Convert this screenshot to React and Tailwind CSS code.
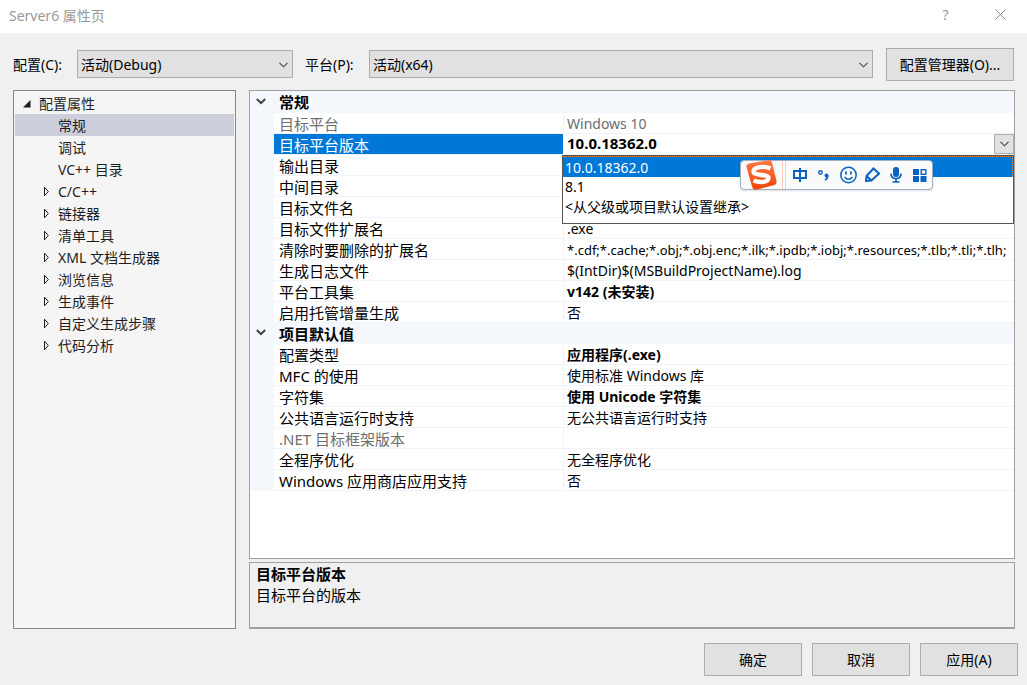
import React, { useState } from 'react';

const treeItems = [
  { label: '常规' },
  { label: '调试' },
  { label: 'VC++ 目录' },
  { label: 'C/C++', expandable: true },
  { label: '链接器', expandable: true },
  { label: '清单工具', expandable: true },
  { label: 'XML 文档生成器', expandable: true },
  { label: '浏览信息', expandable: true },
  { label: '生成事件', expandable: true },
  { label: '自定义生成步骤', expandable: true },
  { label: '代码分析', expandable: true },
];

const versions = ['10.0.18362.0', '8.1', '<从父级或项目默认设置继承>'];

const sections = [
  {
    title: '常规',
    rows: [
      { name: '目标平台', value: 'Windows 10', disabled: true },
      { name: '目标平台版本', value: '10.0.18362.0', editor: true },
      { name: '输出目录', value: '' },
      { name: '中间目录', value: '' },
      { name: '目标文件名', value: '' },
      { name: '目标文件扩展名', value: '.exe' },
      {
        name: '清除时要删除的扩展名',
        value: '*.cdf;*.cache;*.obj;*.obj.enc;*.ilk;*.ipdb;*.iobj;*.resources;*.tlb;*.tli;*.tlh;',
        long: true,
      },
      { name: '生成日志文件', value: '$(IntDir)$(MSBuildProjectName).log' },
      { name: '平台工具集', value: 'v142 (未安装)', bold: true },
      { name: '启用托管增量生成', value: '否' },
    ],
  },
  {
    title: '项目默认值',
    rows: [
      { name: '配置类型', value: '应用程序(.exe)', bold: true },
      { name: 'MFC 的使用', value: '使用标准 Windows 库' },
      { name: '字符集', value: '使用 Unicode 字符集', bold: true },
      { name: '公共语言运行时支持', value: '无公共语言运行时支持' },
      { name: '.NET 目标框架版本', value: '', disabled: true },
      { name: '全程序优化', value: '无全程序优化' },
      { name: 'Windows 应用商店应用支持', value: '否' },
    ],
  },
];

const Chevron = ({ className }) => (
  <svg className={className} width="9" height="6" viewBox="0 0 9 6" fill="none" stroke="#444" strokeWidth="1.1">
    <path d="M0.5 0.8L4.5 4.8L8.5 0.8" />
  </svg>
);

const ComboBox = ({ id, value, className }) => (
  <div className={`relative h-7 ${className}`}>
    <select id={id} className="h-full w-full appearance-none border border-[#acacac] bg-[#e1e1e1] pl-[3px] pt-0.5 text-sm text-black">
      <option>{value}</option>
    </select>
    <Chevron className="pointer-events-none absolute right-[5px] top-3" />
  </div>
);

const DialogButton = ({ children, className }) => (
  <button className={`h-[33px] border border-[#acacac] bg-[#e1e1e1] text-sm text-black hover:border-[#0078d7] hover:bg-[#e5f1fb] ${className}`}>
    {children}
  </button>
);

const ImeToolbar = () => (
  <div className="absolute left-[177px] top-1 z-20 flex h-[30px] w-[193px] items-center rounded-sm border border-[#9fb0c2] bg-[#fafafa] shadow-sm">
    <svg className="ml-1 shrink-0" width="33" height="30" viewBox="0 0 33 30">
      <defs>
        <linearGradient id="imeLogo" x1="0" y1="0" x2="0" y2="1">
          <stop offset="0" stopColor="#ff7846" />
          <stop offset="1" stopColor="#f04405" />
        </linearGradient>
      </defs>
      <path d="M4 3.5L24 0.3Q26.500 0 27 2.500L31.500 21Q32 24 29.500 25L11 29.700Q8 30 7.200 27L1.500 7Q1 4.200 4 3.500Z" fill="url(#imeLogo)" />
      <path d="M25.500 8.500C19 5.500 8.500 7 8.500 11.500C8.500 16.500 23.500 13.500 23.500 18C23.500 22.500 14.500 23 8.500 20.500" fill="none" stroke="#fff" strokeWidth="4.4" />
    </svg>
    <span className="ml-1 h-full w-1 shrink-0 border-x border-[#f9cdbd]" />
    <svg className="ml-[7px] shrink-0" width="134" height="20" viewBox="0 0 134 20" fill="none" stroke="#0a63c0" strokeWidth="2">
      <path d="M1 6H13V13H1ZM7 3V17" />
      <circle cx="27.500" cy="7.500" r="1.700" strokeWidth="1.400" />
      <circle cx="33.500" cy="10.500" r="2" fill="#0a63c0" stroke="none" />
      <path d="M34.500 10.500Q35 13.500 32 15" strokeWidth="1.800" />
      <circle cx="55.500" cy="10" r="7.700" strokeWidth="1.500" />
      <path d="M53 6.500V9.500M58 6.500V9.500" strokeWidth="1.800" />
      <path d="M51.500 12Q55.500 16.500 59.500 12" strokeWidth="1.500" />
      <path d="M73 16L73.500 11L80.500 3.500L86 8.500L78.500 15.500ZM73.500 11L78.500 15.500" strokeWidth="2" />
      <rect x="100" y="2" width="6" height="10" rx="3" fill="#0a63c0" stroke="none" />
      <path d="M98 8.500Q98 13.500 103 13.500Q108 13.500 108 8.500M103 13.500V17M99.500 17H106.500" strokeWidth="1.700" />
      <path d="M120 4H126V10H120ZM120 11H126V17H120ZM127.500 11H133.500V17H127.500Z" fill="#0a63c0" stroke="none" />
      <rect x="128.200" y="4.700" width="4.600" height="4.600" strokeWidth="1.400" />
    </svg>
  </div>
);

const VersionEditor = ({ value, onChange }) => (
  <div className="relative flex h-5 items-center">
    <input
      aria-label="目标平台版本"
      className="h-5 w-full min-w-0 bg-white pl-1 text-[15px] font-bold text-black outline-none"
      value={value}
      onChange={(e) => onChange(e.target.value)}
    />
    <button aria-label="展开" className="flex h-5 w-5 shrink-0 items-center justify-center border border-[#acacac] bg-[#e1e1e1]">
      <Chevron />
    </button>
    <div className="absolute -left-px right-0 top-[21px] z-10 border border-[#555] bg-white pb-1.5">
      <ul role="listbox" aria-label="版本列表">
        {versions.map((version, i) => (
          <li
            key={version}
            role="option"
            aria-selected={i === 0}
            onClick={() => onChange(version)}
            className={
              i === 0
                ? 'h-[21px] cursor-default border-r border-t border-dotted border-[#ff8728] bg-[#0078d7] pl-0.5 leading-[21px] text-white'
                : 'h-5 cursor-default pl-0.5 leading-5 text-black'
            }
          >
            {version}
          </li>
        ))}
      </ul>
      <ImeToolbar />
    </div>
  </div>
);

const App = () => {
  const [version, setVersion] = useState('10.0.18362.0');
  const [selected, setSelected] = useState('常规');

  return (
    <div className="flex min-h-screen flex-col bg-[#f0f0f0] font-['Noto_Sans','Noto_Sans_CJK_SC',sans-serif] text-sm text-black">
      {/* Title bar */}
      <header className="flex h-[33px] items-center bg-white text-[#999]">
        <h1 className="flex-1 pb-0.5 pl-[9px] text-sm">Server6 属性页</h1>
        <button aria-label="帮助" className="h-full w-[55px] pb-1 text-sm">?</button>
        <button aria-label="关闭" className="flex h-full w-[54px] items-center justify-center pb-1">
          <svg width="11" height="11" viewBox="0 0 11 11" stroke="#8a8a8a" strokeWidth="1">
            <path d="M0.5 0.500L10.500 10.500M10.500 0.500L0.500 10.500" />
          </svg>
        </button>
      </header>

      {/* Configuration / platform */}
      <div className="flex h-[57px] items-start px-[13px] pt-[15px]">
        <div className="flex h-8 flex-1 items-center">
          <label htmlFor="config" className="w-16 shrink-0 whitespace-nowrap pt-0.5">配置(C):</label>
          <ComboBox id="config" value="活动(Debug)" className="w-[216px]" />
          <label htmlFor="platform" className="ml-3 w-16 shrink-0 whitespace-nowrap pt-0.5">平台(P):</label>
          <ComboBox id="platform" value="活动(x64)" className="flex-1" />
        </div>
        <DialogButton className="ml-[13px] w-32">配置管理器(O)...</DialogButton>
      </div>

      <main className="flex flex-1 gap-[13px] pl-[13px] pr-3">
        {/* Category tree */}
        <nav className="w-[223px] shrink-0 border border-[#828790] bg-[#f5f5f5] p-px leading-[22px] text-[#1e1e1e]">
          <button className="flex h-[22px] w-full items-center pl-2 pt-px text-left">
            <svg className="mr-2 shrink-0" width="8" height="8" viewBox="0 0 8 8">
              <path d="M7.500 0V7.500H0Z" fill="#1e1e1e" />
            </svg>
            配置属性
          </button>
          <ul>
            {treeItems.map((item) => (
              <li key={item.label}>
                <button
                  onClick={() => setSelected(item.label)}
                  className={`flex h-[22px] w-full items-center pl-7 pt-px text-left ${selected === item.label ? 'bg-[#cccedb]' : ''}`}
                >
                  <span className="flex w-[15px] shrink-0 items-center">
                    {item.expandable && (
                      <svg width="6" height="11" viewBox="0 0 6 11" fill="none" stroke="#1e1e1e">
                        <path d="M1.500 1.200V9.800L5.300 5.500Z" />
                      </svg>
                    )}
                  </span>
                  {item.label}
                </button>
              </li>
            ))}
          </ul>
        </nav>

        <div className="flex min-w-0 flex-1 flex-col gap-[3px]">
          {/* Property grid */}
          <section className="flex-1 border border-[#a0a0a0] bg-white">
            <table className="w-full table-fixed border-separate border-spacing-0">
              <colgroup>
                <col className="w-6" />
                <col className="w-[289px]" />
                <col />
              </colgroup>
              {sections.map((section, s) => (
                <tbody key={section.title}>
                  <tr className={`bg-[#f4f7fc] ${s === 0 ? 'h-[22px]' : 'h-[21px]'}`}>
                    <td className="p-0 pb-0.5">
                      <svg className="ml-1.5" width="10" height="7" viewBox="0 0 10 7" fill="none" stroke="#444" strokeWidth="2">
                        <path d="M0.800 1L5 5L9.200 1" />
                      </svg>
                    </td>
                    <th colSpan={2} className="p-0 pl-[5px] text-left text-[15px] font-bold leading-5">{section.title}</th>
                  </tr>
                  {section.rows.map((row) => (
                    <tr key={row.name} className={`h-[21px] ${row.disabled ? 'text-[#6d6d6d]' : ''}`}>
                      <td className="bg-[#f4f7fc] p-0" />
                      <td
                        className={`truncate border-b border-[#f0f3f9] p-0 pl-[5px] pt-0.5 text-[15px] leading-[18px] ${
                          row.editor ? 'bg-[#0078d7] text-white' : ''
                        }`}
                      >
                        {row.name}
                      </td>
                      {row.editor ? (
                        <td className="border-b border-[#f0f3f9] p-0">
                          <VersionEditor value={version} onChange={setVersion} />
                        </td>
                      ) : (
                        <td
                          className={`overflow-hidden whitespace-nowrap border-b border-l border-[#f0f3f9] p-0 pl-[3px] pt-0.5 leading-[18px] ${
                            row.bold ? 'font-bold' : ''
                          } ${row.long ? 'text-[13px]' : ''}`}
                        >
                          {row.value}
                        </td>
                      )}
                    </tr>
                  ))}
                </tbody>
              ))}
            </table>
          </section>

          {/* Description of the selected property */}
          <section className="h-[67px] border border-b-2 border-[#a0a0a0] px-1.5 pt-px text-[15px] leading-[21px]">
            <h2 className="font-bold">目标平台版本</h2>
            <p>目标平台的版本</p>
          </section>
        </div>
      </main>

      <footer className="flex justify-end gap-2.5 pb-[9px] pr-[9px] pt-[14px]">
        <DialogButton className="w-[98px]">确定</DialogButton>
        <DialogButton className="w-[98px]">取消</DialogButton>
        <DialogButton className="w-[98px]">应用(A)</DialogButton>
      </footer>
    </div>
  );
};

export default App;
